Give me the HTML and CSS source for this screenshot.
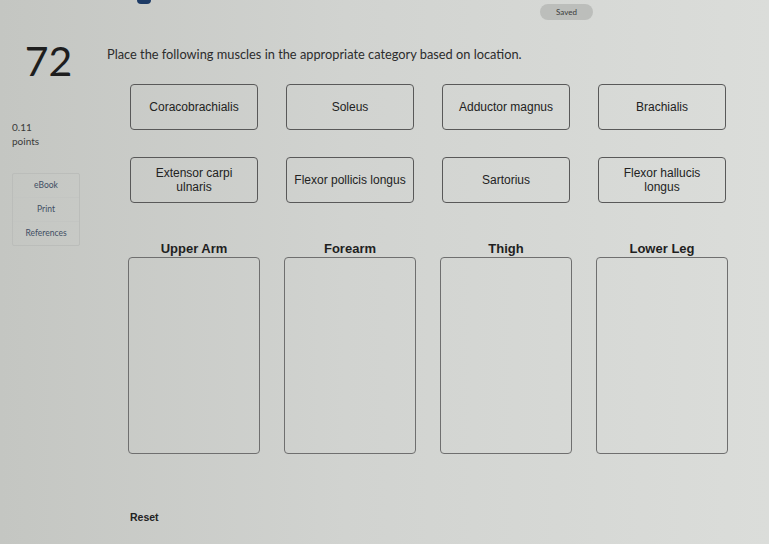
FILE: index.html
```html
<!DOCTYPE html>
<html lang="en">
<head>
  <meta charset="UTF-8">
  <meta name="viewport" content="width=device-width, initial-scale=1.0">
  <title>Question 72</title>
  <link rel="stylesheet" href="styles.css">
</head>
<body>
  <div class="top">
    <span class="top-dot"></span>
    <span class="saved">Saved</span>
  </div>

  <div class="layout">
    <aside class="side">
      <p class="q-num">72</p>
      <p class="points">0.11<br>points</p>
      <ul class="side-nav">
        <li>eBook</li>
        <li>Print</li>
        <li>References</li>
      </ul>
    </aside>

    <main class="main">
      <p class="prompt">Place the following muscles in the appropriate category based on location.</p>

      <div class="tiles">
        <div class="tile">Coracobrachialis</div>
        <div class="tile">Soleus</div>
        <div class="tile">Adductor magnus</div>
        <div class="tile">Brachialis</div>
        <div class="tile">Extensor carpi<br>ulnaris</div>
        <div class="tile">Flexor pollicis longus</div>
        <div class="tile">Sartorius</div>
        <div class="tile">Flexor hallucis<br>longus</div>
      </div>

      <div class="zones">
        <div class="zone">
          <h3 class="zone-title">Upper Arm</h3>
          <div class="zone-box"></div>
        </div>
        <div class="zone">
          <h3 class="zone-title">Forearm</h3>
          <div class="zone-box"></div>
        </div>
        <div class="zone">
          <h3 class="zone-title">Thigh</h3>
          <div class="zone-box"></div>
        </div>
        <div class="zone">
          <h3 class="zone-title">Lower Leg</h3>
          <div class="zone-box"></div>
        </div>
      </div>

      <p class="reset">Reset</p>
    </main>
  </div>
</body>
</html>
```

FILE: styles.css
```css
/* whole page, a bit darker on the left like the photo */
body { margin: 0; color: #2a2a2a; font-family: "Liberation Sans", Arial, sans-serif; background: linear-gradient(to right, #c4c6c2, #d1d3d0 45%, #dbddda); min-height: 544px; }
p { margin: 0; }

/* header */
.top { display: flex; align-items: flex-start; height: 24px; padding-left: 137px; }
.top-dot { display: block; width: 14px; height: 4px; border-radius: 0 0 7px 7px; background-color: #1d3b66; }
.saved { margin: 4px 0 0 389px; padding: 3px 16px; border-radius: 9px; background-color: #bcbebb; color: #3a3a3a; font-family: Lato, sans-serif; font-size: 8px; line-height: 10px; }

.layout { display: flex; }

/* left column */
.side { width: 68px; padding: 0 27px 0 12px; font-family: Lato, sans-serif; }
.q-num { margin-top: 15px; padding-left: 5px; text-align: center; font-size: 41px; line-height: 44px; font-weight: 400; color: #1e1e1e; }
.points { margin-top: 37px; font-size: 10px; line-height: 14px; color: #3a3a3a; }
.side-nav { margin: 25px 0 0; padding: 0; list-style: none; border: 1px solid #bbbdba; border-radius: 2px; }
.side-nav li { height: 23px; line-height: 23px; text-align: center; font-size: 8.5px; color: #3f4e63; border-top: 1px solid #c3c5c2; }
.side-nav li:first-child { border-top: 0; }

/* main */
.main { flex: 1; }
.prompt { margin-top: 23px; font-family: Lato, sans-serif; font-size: 12.8px; line-height: 15px; color: #2c2c2c; }

.tiles { display: grid; grid-template-columns: repeat(4, 128px); column-gap: 28px; row-gap: 27px; margin: 22px 0 0 23px; }
.tile { display: flex; align-items: center; justify-content: center; height: 44px; border: 1px solid #595959; border-radius: 4px; text-align: center; font-size: 12px; line-height: 14px; color: #222; }

.zones { display: grid; grid-template-columns: repeat(4, 132px); column-gap: 24px; margin: 38px 0 0 21px; }
.zone-title { margin: 0; text-align: center; font-size: 13px; line-height: 16px; font-weight: bold; color: #1f1f1f; }
.zone-box { height: 195px; border: 1px solid #6f6f6f; border-radius: 4px; }

.reset { margin: 56px 0 0 23px; font-size: 10.5px; line-height: 14px; font-weight: bold; color: #222; }
```
